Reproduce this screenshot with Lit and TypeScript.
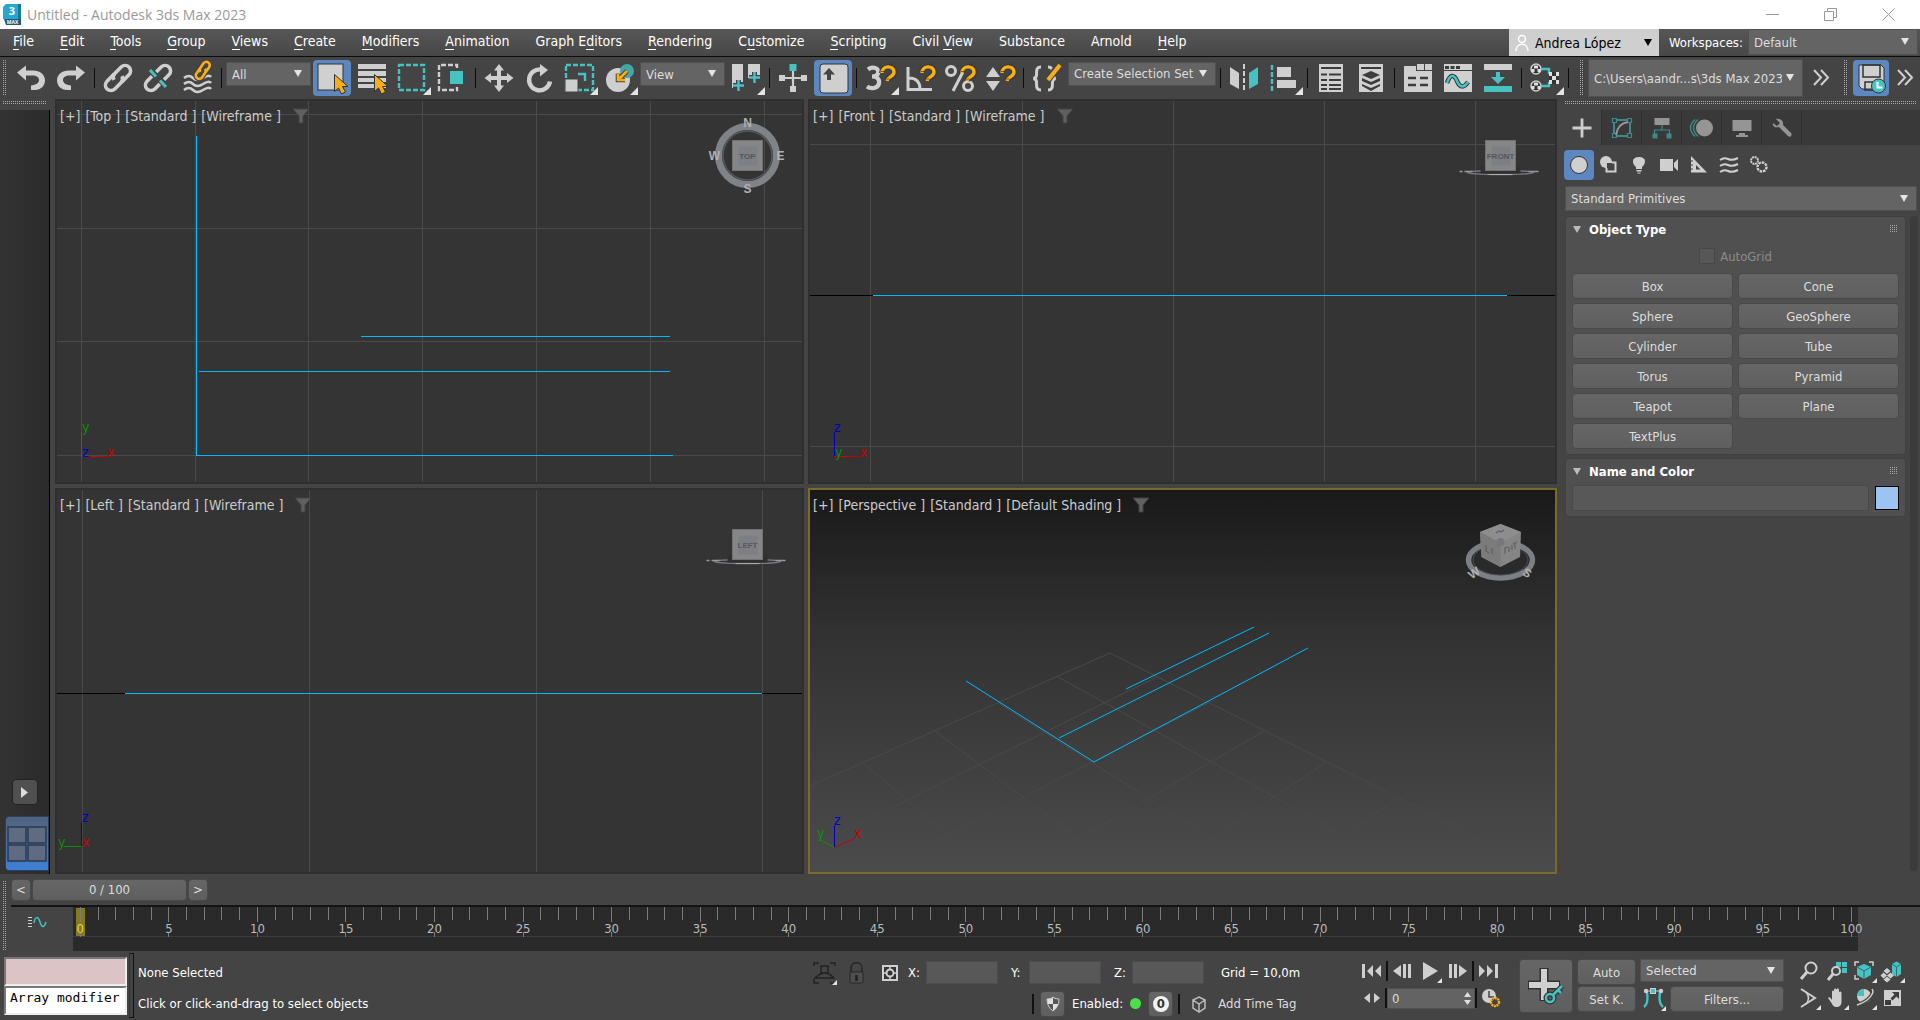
import { LitElement, html, svg, css, TemplateResult } from "lit";
import { customElement, property } from "lit/decorators.js";
import { classMap } from "lit/directives/class-map.js";

const flyout = svg`<path d="M39 29v8h-8z" fill="#e4e4e4"/>`;
const magnet = svg`<path d="M22 15c0-8 12-8 12-1 0 5-6 4-7 9" fill="none" stroke="#3a3a3a" stroke-width="6"/><path d="M22 15c0-8 12-8 12-1 0 5-6 4-7 9" fill="none" stroke="#fbae17" stroke-width="3.400"/><path d="M21 13.500h3M26 21h3.500" stroke="#8a5c00" stroke-width="1"/>`;
const cursor = svg`<path d="M22.500 16.500v17l4-3.500 3 6 4-2-3-5.500h5.500z" fill="#fbae17" stroke="#333" stroke-width="1"/>`;
const chain = (c: string, w = 3.6) => svg`<g fill="none" stroke="${c}" stroke-width="${w}"><path d="M20 14.500h-10a5.500 5.500 0 0 0 0 11h9a5.500 5.500 0 0 0 5-4"/><path d="M20 25.500h10a5.500 5.500 0 0 0 0-11h-9a5.500 5.500 0 0 0-5 4"/></g>`;
const waves = (c: string) => svg`<path d="M6 20q5-4 9 0t10 0 8-1M6 26q5-4 9 0t10 0 8-1M6 32q5-4 9 0t10 0 8-1" fill="none" stroke="${c}" stroke-width="2.600"/>`;

const icons: Record<string, TemplateResult> = {
  undo: svg`<path d="M6 14.500l9-7v5H22c7 0 12 4 12 10 0 5-4 9.500-10 9.500h-4v-4.500c5-.5 8-2.500 8-5.500s-3-4.500-6-4.500h-7v5z" fill="#cfcfcf"/>`,
  redo: svg`<path d="M34 14.500l-9-7v5H18c-7 0-12 4-12 10 0 5 4 9.500 10 9.500h4v-4.500c-5-.5-8-2.500-8-5.500s3-4.500 6-4.500h7v5z" fill="#cfcfcf"/>`,
  link: svg`<g transform="rotate(-45 20 20)">${chain("#cfcfcf")}</g>`,
  unlink: svg`<g transform="rotate(-45 20 20)" fill="none" stroke="#cfcfcf" stroke-width="3.600"><path d="M17 14.500h-7a5.500 5.500 0 0 0 0 11h7M23 25.500h7a5.500 5.500 0 0 0 0-11h-7"/></g><path d="M12 12l6 6.500M22 22.500l6 6.500" stroke="#46c2c2" stroke-width="3"/>`,
  bind: svg`${waves("#cfcfcf")}<g transform="translate(13 -2) rotate(-55 14 14) scale(.62)">${chain("#444", 8)}${chain("#fbae17", 4.2)}</g>`,
  select: svg`<rect x="6" y="6" width="25" height="26" fill="#d0d0d0" stroke="#333"/>${cursor}`,
  byName: svg`<path d="M6 6h28v5H6zM6 13h28v5H6zM6 20h28v4H6zM6 26h28v4H6z" fill="#cfcfcf"/>${cursor}`,
  rect: svg`<rect x="7" y="7" width="25" height="25" fill="none" stroke="#46c2c2" stroke-width="2.400" stroke-dasharray="5 2"/>${flyout}`,
  crossing: svg`<path d="M25 10V7H7v25h18v-3" fill="none" stroke="#cfcfcf" stroke-width="2.400" stroke-dasharray="5 2"/><rect x="18" y="13" width="13" height="13" fill="#46c2c2"/>`,
  move: svg`<path d="M20 6l5 6.500h-3V18h6v-3l6.500 5-6.500 5v-3h-6v5.500h3L20 34l-5-6.500h3V22h-6v3l-6.500-5 6.500-5v3h6v-5.500h-3z" fill="#cfcfcf"/>`,
  rotate: svg`<path d="M22 11.500a10.500 10.500 0 1 0 9 12" fill="none" stroke="#cfcfcf" stroke-width="4.400"/><path d="M21 6l8 6-8 6.500z" fill="#cfcfcf"/>`,
  scale: svg`<rect x="7" y="7" width="27" height="25" fill="none" stroke="#46c2c2" stroke-width="2.400" stroke-dasharray="5 2"/><rect x="6" y="21" width="13" height="13" fill="#cfcfcf" stroke="#444"/><path d="M19 16h7v7" fill="none" stroke="#46c2c2" stroke-width="2.400"/>${flyout}`,
  place: svg`<circle cx="19" cy="22" r="12" fill="#cfcfcf"/><circle cx="28" cy="13" r="7" fill="#46a5a8"/><path d="M28 13l-8 8M19 15.500V22h7" fill="none" stroke="#444" stroke-width="4.600"/><path d="M28 13l-8 8M19 15.500V22h7" fill="none" stroke="#fbae17" stroke-width="2.600"/>${flyout}`,
  pivot: svg`<path d="M6 6h11v18h-5v6H6zM22 6h12v14H22z" fill="#cfcfcf"/><path d="M12.500 22v11M7 27.500h11M28.500 14v11M23 19.500h11" stroke="#444" stroke-width="5"/><path d="M12.500 22v11M7 27.500h11M28.500 14v11M23 19.500h11" stroke="#46c2c2" stroke-width="2.400"/>${flyout}`,
  manipulate: svg`<path d="M20 10v20M9 20h22" stroke="#cfcfcf" stroke-width="2.200"/><path d="M6 17h6v6H6zM28 17h6v6h-6zM17 28h6v6h-6z" fill="#cfcfcf"/><path d="M16.500 6h7v7h-7z" fill="#46c2c2"/>`,
  keyboard: svg`<rect x="7" y="6" width="28" height="29" rx="3" fill="#cfcfcf" stroke="#333"/><path d="M16 10l6 6.500h-4V22h-4v-5.500h-4z" fill="#444"/>`,
  snap: svg`<path d="M8 11.500c5-4 12-1 10 4-1 3-4 3-6 3 4 0 8 2 7 7-1 5-8 6-12 3" fill="none" stroke="#cfcfcf" stroke-width="4.200"/>${magnet}${flyout}`,
  angle: svg`<path d="M8 9v22.500h24M9 20c8 0 11 5 11 11" fill="none" stroke="#cfcfcf" stroke-width="3"/>${magnet}`,
  percent: svg`<circle cx="11" cy="13" r="4.500" fill="none" stroke="#cfcfcf" stroke-width="3"/><circle cx="28" cy="28" r="4.500" fill="none" stroke="#cfcfcf" stroke-width="3"/><path d="M26 8L13 33" stroke="#cfcfcf" stroke-width="3"/>${magnet}`,
  spinner: svg`<path d="M6 19l7-10 7 10zM6 23h14l-7 10z" fill="#cfcfcf"/>${magnet}`,
  braces: svg`<path d="M14 9c-6 0-4 6-4.500 8 0 2-1 3-3 3.500 2 .5 3 1.500 3 3.500.5 2-1.500 8 4.500 8M21 9c6 0 4 6 4.500 8 0 2 1 3 3 3.500-2 .5-3 1.500-3 3.500-.5 2 1.500 8-4.500 8" fill="none" stroke="#cfcfcf" stroke-width="3"/><path d="M32 7L20 23" stroke="#444" stroke-width="7"/><path d="M33 7L21 22" stroke="#fbae17" stroke-width="4"/>`,
  mirror: svg`<path d="M6 9l9 5v13l-9 5z" transform="rotate(180 10.500 20.500)" fill="none"/><path d="M6 9l9 6v16l-9-5z" fill="#cfcfcf"/><path d="M34 9l-9 6v16l9-5z" fill="#46c2c2"/><path d="M20 6v28" stroke="#cfcfcf" stroke-width="2" stroke-dasharray="5 2"/>`,
  align: svg`<path d="M8 7v26" stroke="#46c2c2" stroke-width="2.400" stroke-dasharray="5 2"/><path d="M13 9h14v10H13zM13 22h19v8H13z" fill="#cfcfcf"/>${flyout}`,
  explorer: svg`<rect x="8" y="6" width="24" height="28" fill="#d0d0d0"/><path d="M10 10h20M10 16.500h6M18 16.500h12M10 22h6M18 22h12M10 27h6M18 27h12M10 31h6M18 31h12" stroke="#3c3c3c" stroke-width="2"/>`,
  layers: svg`<rect x="8" y="6" width="24" height="28" fill="#d0d0d0"/><path d="M10 10h20" stroke="#3c3c3c" stroke-width="2"/><path d="M20 13l9 4-9 4-9-4zM11 20l9 4 9-4v3l-9 4-9-4zM11 26l9 4 9-4v2l-9 5-9-5z" fill="#3c3c3c"/>`,
  ribbon: svg`<path d="M6 8h12v5h16v21H6z" fill="#d0d0d0"/><path d="M19 6h7v6h-7zM27 6h7v6h-7z" fill="#d0d0d0"/><path d="M10 20h8M22 20h8M10 27h8M22 27h8" stroke="#3c3c3c" stroke-width="2.400"/>`,
  curve: svg`<rect x="6" y="6" width="28" height="28" fill="#d0d0d0"/><path d="M7 9.500h4M12.500 9.500h4M18 9.500h4" stroke="#3c3c3c" stroke-width="3"/><path d="M6 12.500h28" stroke="#3c3c3c"/><path d="M9 25c3-9 7-9 10-2s7 7 11 1" fill="none" stroke="#333" stroke-width="4.500"/><path d="M9 25c3-9 7-9 10-2s7 7 11 1" fill="none" stroke="#46c2c2" stroke-width="2.600"/>`,
  schematic: svg`<path d="M6 6h28v6H6z" fill="#cfcfcf"/><path d="M6 28h28v6H6zM18 14h4v5h5l-7 7-7-7h5z" fill="#46c2c2"/>`,
  material: svg`<g stroke="#cfcfcf" fill="#333" stroke-width="1.500"><circle cx="11" cy="11" r="5"/><circle cx="11" cy="28" r="5"/></g><path d="M9 7.500h4v3H9zM6.500 11h3v3h-3zM12.500 11h3v3h-3zM9 24.500h4v3H9zM6.500 28h3v3h-3zM12.500 28h3v3h-3z" fill="#e0e0e0"/><path d="M17 11h7v5M17 28h7v-4" fill="none" stroke="#46c2c2" stroke-width="2.400"/><rect x="24" y="14" width="10" height="12" fill="#333"/><path d="M24 14h3v4h-3zM31 14h3v4h-3zM27 18h4v4h-4zM24 22h3v4h-3zM31 22h3v4h-3z" fill="#e0e0e0"/>${flyout}`,
  autosave: svg`<path d="M8 7h22l3 3v21H11l-3-3z" fill="#cfcfcf" stroke="#333"/><path d="M12 7h17v12H12zM14 24h12v8H14z" fill="none" stroke="#333" stroke-width="1.500"/><circle cx="27.500" cy="28" r="7" fill="#46c2c2" stroke="#333"/><path d="M26.500 24v5.500h5" fill="none" stroke="#fff" stroke-width="2.200"/>`,
  more: svg`<path d="M13 12l7 7.500-7 7.500M20 12l7 7.500-7 7.500" fill="none" stroke="#cfcfcf" stroke-width="2"/>`,

  create: svg`<path d="M20 10.500v19M10.500 20h19" stroke="#cfcfcf" stroke-width="2.800"/>`,
  modify: svg`<path d="M12 12h16v16H12z" fill="none" stroke="#3c8a8c" stroke-width="2"/><path d="M10.500 10.500h4v4h-4zM25.500 10.500h4v4h-4zM10.500 25.500h4v4h-4zM25.500 25.500h4v4h-4z" fill="#3a3a3a" stroke="#3c8a8c" stroke-width="1.200"/><path d="M14 27c1-7 5-12 12-13" fill="none" stroke="#999" stroke-width="1.800"/>`,
  hierarchy: svg`<path d="M12.500 10h15v7h-15z" fill="#959595"/><path d="M20 17v5M12.500 26v-4h15v4" fill="none" stroke="#3c8a8c" stroke-width="1.200"/><path d="M10.500 25.500h5v5h-5zM24.500 25.500h5v5h-5z" fill="#3c8a8c"/>`,
  motion: svg`<circle cx="22.500" cy="20" r="8.500" fill="#959595"/><path d="M16 11.500q-9 8 0 17M13 11.500q-9 8 0 17" fill="none" stroke="#3c8a8c" stroke-width="1.400"/>`,
  display: svg`<path d="M10.500 12h19v11h-19zM17 25h6v2h3v2H14v-2h3z" fill="#959595"/>`,
  utilities: svg`<path d="M11 15l4 3 3-3-4-4c4-1 8 2 7 6l8 8c2 2-1 5-3 3l-9-9c-4 1-7-1-6-4z" fill="#959595"/>`,

  geometry: svg`<circle cx="15" cy="15" r="8.500" fill="#d0d0d0" stroke="#333"/>`,
  shapes: svg`<circle cx="12" cy="12" r="6" fill="#cfcfcf"/><rect x="12.500" y="12.500" width="9" height="9" fill="none" stroke="#cfcfcf" stroke-width="2"/><path d="M13 13h5c0 3-2 5-5 5z" fill="#444"/>`,
  light: svg`<path d="M15 7c-8 0-7 7-3 10v2h6v-2c4-3 5-10-3-10zM12.500 20h5v1.500h-5zM13.500 22.500h3v1h-3z" fill="#cfcfcf"/>`,
  camera: svg`<path d="M6 9h13v12H6zM20 13l4-4v12l-4-4z" fill="#cfcfcf"/>`,
  helper: svg`<path d="M7 6l16 16.500H7v-3h2v-1H7v-3h2v-1H7v-3h2v-1H7z" fill="#cfcfcf"/><path d="M12 15l4.500 4.500H12z" fill="#444"/>`,
  space: svg`<path d="M6 10q4-3 8-1t10-1M6 16q4-3 8-1t10-1M6 22q4-3 8-1t10-1" fill="none" stroke="#cfcfcf" stroke-width="2"/>`,
  systems: svg`<circle cx="10.500" cy="10.500" r="3.500" fill="none" stroke="#cfcfcf" stroke-width="2" stroke-dasharray="2 .7"/><circle cx="18" cy="17" r="4.500" fill="none" stroke="#cfcfcf" stroke-width="2.400" stroke-dasharray="2.500 .9"/>`,
};

const pic = (name: string, size: number) =>
  html`<svg width=${size} height=${size} viewBox="0 0 ${size} ${size}" aria-hidden="true">${icons[name]}</svg>`;

const BASE = css`
  * { box-sizing: border-box; }
  button, select, input { font: inherit; color: inherit; margin: 0; padding: 0; border: 0; border-radius: 0; outline: 0; background: none; }
  button { display: flex; align-items: center; justify-content: center; }
  svg { display: block; flex: none; }
  .face { background: linear-gradient(#666, #5f5f5f); border: 1px solid #494949; border-radius: 4px; color: #ddd; }
  .grip, .dots { background: conic-gradient(#a8a8a8 25%, transparent 0) 0 0 / 2px 2px; }
`;

@customElement("drop-down")
class DropDown extends LitElement {
  @property() value = "";
  @property() label = "";
  static styles = [BASE, css`
    :host { display: block; position: relative; background: #646464; border: 1px solid #505050; color: #ddd; font-size: 13px; }
    select { appearance: none; display: block; width: 100%; height: 100%; padding: 0 20px 0 5px; background: none; }
    .arrow { position: absolute; right: 8px; top: 50%; width: 8px; height: 7px; margin-top: -4px; pointer-events: none; }
  `];
  render() {
    return html`<select aria-label=${this.label}><option>${this.value}</option></select>
      <svg class="arrow" viewBox="0 0 8 7"><path d="M0 0h8L4 7z" fill="#e4e4e4"/></svg>`;
  }
}

type Line = [number, number, number, number];
const GRID = "#4a4a4a", BLUE = "#00b9ff";
const straight = (list: Line[], c: string) =>
  list.map(([a, b, d, e]) => svg`<rect x=${a} y=${b} width=${d - a + 1} height=${e - b + 1} fill=${c} shape-rendering="crispEdges"/>`);
const slanted = (list: Line[], c: string) =>
  list.map(([a, b, d, e]) => svg`<line x1=${a} y1=${b} x2=${d} y2=${e} stroke=${c}/>`);
const axis = (x: number, y: number, dx: number, dy: number, c: string, t: string, tx: number, ty: number) =>
  svg`<line x1=${x + 0.5} y1=${y + 0.5} x2=${x + dx + 0.5} y2=${y + dy + 0.5} stroke=${c}/><text class="axis" x=${tx} y=${ty} fill=${c}>${t}</text>`;

const flatCube = (x: number, y: number, name: string) => svg`
  <rect x=${x - 15} y=${y - 15} width="30" height="30" fill="#868686" stroke="#727272"/>
  <rect x=${x - 9} y=${y - 9} width="19" height="19" fill="#7d7f84"/>
  <text class="cube" x=${x} y=${y + 3}>${name}</text>`;
const sideCube = (x: number, y: number, name: string) => svg`
  <ellipse cx=${x} cy=${y + 17} rx="33" ry="2" fill="none" stroke="#777a7f" stroke-width="1.500"/>
  <path d="M${x - 41} ${y + 16}h3M${x - 36} ${y + 16}h8M${x + 28} ${y + 16}h10" stroke="#999" stroke-width="1.500"/>
  <rect x=${x - 20} y=${y + 10} width="40" height="8" fill="#303030"/>
  ${flatCube(x, y, name)}
  <path d="M${x - 12} ${y + 19}h24" stroke="#aaa"/>`;

const REACH: Line[] = [
  [1110, 653, 810, 786], [1110, 653, 1502, 850],
  [1058, 677, 1370, 850], [998, 703, 1230, 850], [935, 731, 1093, 850], [863, 763, 969, 852],
  [1157, 677, 810, 848], [1208, 703, 920, 850], [1264, 731, 1060, 850], [1325, 763, 1195, 850], [1396, 799, 1325, 850],
];

const GLYPH = { x: "#c80000", y: "#0a8f0a", z: "#0000c8" };
const views = [
  {
    name: "Top", shade: "Wireframe", box: "55 99 749 385",
    body: () => svg`
      ${straight([81, 195, 308, 422, 536, 650, 764].map((x) => [x, 101, x, 481] as Line), GRID)}
      ${straight([114, 228, 341, 455].map((y) => [57, y, 801, y] as Line), GRID)}
      ${straight([[196, 136, 196, 455], [196, 455, 672, 455], [199, 371, 669, 371], [361, 336, 669, 336]], BLUE)}
      ${axis(81, 456, 0, -24, GLYPH.y, "y", 82, 432)}${axis(81, 456, 26, 0, GLYPH.x, "x", 107, 457)}
      <text class="axis" x="82" y="457" fill=${GLYPH.z}>z</text>
      <circle cx="747.500" cy="155.500" r="29" fill="none" stroke="#7f8287" stroke-width="7"/>
      <circle cx="747.500" cy="155.500" r="24.500" fill="none" stroke="#55585c" stroke-width="1.500"/>
      <text class="compass" x="747.500" y="127">N</text><text class="compass" x="747.500" y="193">S</text>
      <text class="compass" x="714.500" y="160">W</text><text class="compass" x="780.500" y="160">E</text>
      ${flatCube(747.5, 155.5, "TOP")}`,
  },
  {
    name: "Front", shade: "Wireframe", box: "808 99 749 385",
    body: () => svg`
      ${straight([870, 1022, 1173, 1324, 1475].map((x) => [x, 101, x, 481] as Line), GRID)}
      ${straight([[810, 144, 1554, 144], [810, 446, 1554, 446]], GRID)}
      ${straight([[810, 295, 1554, 295]], "#000")}${straight([[873, 295, 1506, 295]], BLUE)}
      ${axis(834, 456, 0, -24, GLYPH.z, "z", 834, 432)}${axis(834, 456, 26, 0, GLYPH.x, "x", 860, 457)}
      <text class="axis" x="835" y="457" fill=${GLYPH.y}>y</text>
      ${sideCube(1500.5, 155.5, "FRONT")}`,
  },
  {
    name: "Left", shade: "Wireframe", box: "55 488 749 386",
    body: () => svg`
      ${straight([82, 309, 536, 762].map((x) => [x, 490, x, 871] as Line), GRID)}
      ${straight([[57, 693, 801, 693]], "#000")}${straight([[125, 693, 761, 693]], BLUE)}
      ${axis(81, 846, 0, -24, GLYPH.z, "z", 82, 822)}${axis(81, 846, -18, 0, GLYPH.y, "y", 58, 847)}
      <text class="axis" x="82" y="847" fill=${GLYPH.x}>x</text>
      ${sideCube(747.5, 544.5, "LEFT")}`,
  },
  {
    name: "Perspective", shade: "Default Shading", box: "808 488 749 386",
    body: () => svg`
      ${slanted(REACH, GRID)}
      ${slanted([[966, 681, 1094, 762], [1094, 762, 1308, 648], [1059, 738, 1269, 633], [1126, 689, 1254, 627]], BLUE)}
      ${axis(834, 847, 0, -22, GLYPH.z, "z", 834, 825)}${axis(834, 847, 20, -9, GLYPH.x, "x", 854, 838)}${axis(834, 847, -15, -8, GLYPH.y, "y", 817, 838)}
      <ellipse cx="1500.500" cy="560" rx="32" ry="18" fill="#2a2a2a" stroke="#7c8086" stroke-width="5.500"/>
      <ellipse cx="1500.500" cy="560" rx="27.500" ry="15" fill="none" stroke="#4c4e52"/>
      <text class="compass" transform="rotate(-35 1474 573)" x="1474" y="577">W</text><text class="compass" transform="rotate(35 1527 573)" x="1527" y="577">S</text>
      <path d="M1500.500 524l20.500 8-1 25-19.500 10-19-10-1.500-25z" fill="#858585"/>
      <path d="M1500.500 524l20.500 8-20.500 11-20.500-11z" fill="#8d8d8d"/><path d="M1480 532l20.500 11v24l-19-10z" fill="#7b7b7b"/>
      <circle cx="1500.500" cy="542" r="4" fill="#75777b"/>
      <path d="M1496 533l3-2 2 1 3-2M1486 545v6l3 2M1492 548v6M1505 554v-6l3-1M1509 552v-5M1512 550v-5M1515 549v-6M1513 544l4-2" fill="none" stroke="#606060" stroke-width="1.200"/>`,
  },
];

@customElement("view-port")
class ViewPort extends LitElement {
  @property({ type: Number }) index = 0;
  static styles = [BASE, css`
    :host { display: block; position: relative; overflow: hidden; min-width: 0; min-height: 0; background: #343434; border: 2px solid #2f2f2f; color: #ccc; font-size: 14px; }
    :host([active]) { background: linear-gradient(#191919, #323232 38%, #4b4b4b); border-color: #7e6a28; }
    .scene { position: absolute; inset: -2px; width: calc(100% + 4px); height: calc(100% + 4px); }
    .labels { position: absolute; left: 3px; top: 4px; display: flex; align-items: center; gap: 5px; height: 22px; }
    .labels svg { margin-left: 6px; }
    .axis { font-size: 14px; }
    .cube { font: bold 8px "Liberation Sans", sans-serif; fill: #55575b; text-anchor: middle; }
    .compass { font: bold 12px "Liberation Sans", sans-serif; fill: #b0b0b0; text-anchor: middle; }
  `];
  render() {
    const v = views[this.index];
    return html`
      <svg class="scene" viewBox=${v.box} preserveAspectRatio="xMidYMid slice">${v.body()}</svg>
      <div class="labels">
        <button>[+]</button><button>[${v.name} ]</button><button>[Standard ]</button><button>[${v.shade} ]</button>
        <svg width="18" height="16" viewBox="0 0 18 16"><path d="M1 1h16l-6 7v7H7V8z" fill="#606060" stroke="#424242"/></svg>
      </div>`;
  }
}

@customElement("main-toolbar")
class MainToolbar extends LitElement {
  static styles = [BASE, css`
    :host { display: flex; align-items: center; height: 42px; background: #444; }
    .tool { width: 40px; height: 40px; flex: none; }
    .on { position: relative; }
    .on::before { content: ""; position: absolute; inset: 2px 1px; border-radius: 4px; background: #5d87bf; }
    .on svg { position: relative; }
    .sep { width: 7px; flex: none; display: flex; justify-content: center; }
    .sep::after { content: ""; width: 1px; height: 20px; background: #0c0c0c; }
    .grip { width: 4px; height: 36px; flex: none; }
    .first { margin: 0 5px 0 2px; }
    .mid { margin: 0 5px 0 7px; }
    drop-down { flex: none; height: 24px; margin: 0 1px 8px; }
    .all, .view { width: 85px; }
    .sets { width: 148px; margin-bottom: 9px; }
    .path { flex: 1; height: 38px; margin: 0; max-width: 220px; }
    .narrow { width: 30px; margin-left: 3px; }
    .narrow:last-child { margin-left: 0; }
    .save { width: 38px; }
  `];
  private tool(n: string) {
    return html`<button class=${classMap({ tool: true, on: n === "select" || n === "keyboard" })} aria-label=${n}>${pic(n, 40)}</button>`;
  }
  render() {
    const t = (s: string) => s.split(" ").map((n) => (n === "|" ? html`<span class="sep"></span>` : this.tool(n)));
    return html`
      <span class="grip first"></span>
      ${t("undo redo | link unlink bind |")}
      <drop-down class="all" value="All" label="Selection filter"></drop-down>
      ${t("select byName rect crossing | move rotate scale place")}
      <drop-down class="view" value="View" label="Reference coordinate system"></drop-down>
      ${t("pivot | manipulate keyboard | snap angle percent spinner | braces")}
      <drop-down class="sets" value="Create Selection Set" label="Named selection sets"></drop-down>
      ${t("| mirror align | explorer layers | ribbon curve schematic | material |")}
      <span class="grip mid"></span>
      <drop-down class="path" value="C:\\Users\\aandr...s\\3ds Max 2023" label="Project folder"></drop-down>
      <button class="tool narrow" aria-label="More">${pic("more", 40)}</button>
      <span class="grip mid"></span>
      <button class="tool save on" aria-label="Autosave">${pic("autosave", 40)}</button>
      <button class="tool narrow" aria-label="More">${pic("more", 40)}</button>`;
  }
}

@customElement("command-panel")
class CommandPanel extends LitElement {
  static styles = [BASE, css`
    :host { display: flex; flex-direction: column; padding: 2px 0 3px 6px; font-size: 13px; color: #ddd; }
    .grip { height: 4px; margin: 0 3px 5px 1px; }
    .tabs { display: flex; height: 35px; background: #393939; }
    .tab { width: 40px; overflow: hidden; border-right: 1px solid #2f2f2f; }
    .tab:first-child { background: #444; width: 39px; }
    .kinds { display: flex; height: 41px; padding: 5px 0 0 1px; }
    .kind { width: 30px; height: 30px; border-radius: 4px; }
    .kind:first-child { background: #5d87bf; }
    drop-down { height: 25px; margin: 0 3px 5px 2px; }
    .body { flex: 1; display: flex; gap: 4px; padding: 0 2px 0 2px; }
    .rolls { flex: 1; display: flex; flex-direction: column; gap: 3px; }
    .bar { width: 8px; border-radius: 4px; background: #3b3b3b; }
    .roll { background: #505050; border: 1px solid #404040; border-radius: 4px; padding: 0 6px 5px; }
    .head { display: flex; align-items: center; height: 24px; gap: 8px; padding: 0 2px 0 1px; }
    h2 { flex: 1; margin: 0; font-size: 13px; font-weight: bold; color: #fff; }
    .dots { width: 8px; height: 8px; }
    .auto { display: flex; align-items: center; justify-content: center; gap: 5px; height: 22px; margin: 4px 0 6px; color: #8b8b8b; }
    .auto input { appearance: none; width: 16px; height: 16px; background: #575757; border: 1px solid #484848; }
    .types { display: grid; grid-template-columns: 1fr 1fr; gap: 4px 5px; }
    .types button { height: 26px; }
    .name { display: flex; align-items: center; gap: 6px; margin-top: 2px; }
    .name input { flex: 1; min-width: 0; height: 26px; background: #585858; border: 1px solid #494949; }
    .swatch { width: 24px; height: 24px; background: #9bc4f2; border: 1px solid #000; }
  `];
  private roll(title: string, content: TemplateResult) {
    return html`<section class="roll"><div class="head">
      <svg width="8" height="7" viewBox="0 0 8 7"><path d="M0 0h8L4 7z" fill="#bbb"/></svg>
      <h2>${title}</h2><span class="dots"></span></div>${content}</section>`;
  }
  render() {
    const types = "Box Cone Sphere GeoSphere Cylinder Tube Torus Pyramid Teapot Plane TextPlus".split(" ");
    return html`
      <div class="grip"></div>
      <div class="tabs">${"create modify hierarchy motion display utilities".split(" ").map((n) => html`<button class="tab" aria-label=${n}>${pic(n, 40)}</button>`)}</div>
      <div class="kinds">${"geometry shapes light camera helper space systems".split(" ").map((n) => html`<button class="kind" aria-label=${n}>${pic(n, 30)}</button>`)}</div>
      <drop-down value="Standard Primitives" label="Category"></drop-down>
      <div class="body">
        <div class="rolls">
          ${this.roll("Object Type", html`
            <label class="auto"><input type="checkbox" disabled>AutoGrid</label>
            <div class="types">${types.map((n) => html`<button class="face">${n}</button>`)}</div>`)}
          ${this.roll("Name and Color", html`<div class="name"><input type="text" aria-label="Object name"><button class="swatch" aria-label="Object color"></button></div>`)}
        </div>
        <div class="bar"></div>
      </div>`;
  }
}

@customElement("time-line")
class TimeLine extends LitElement {
  static styles = [BASE, css`
    :host { display: flex; height: 77px; background: #444; font-size: 13px; color: #ddd; }
    .grip { width: 4px; margin: 7px 5px 1px 2px; }
    .col { flex: 1; min-width: 0; }
    .slide { display: flex; align-items: center; gap: 1px; height: 31px; }
    .slide button { height: 22px; width: 20px; }
    .slide .thumb { width: 155px; }
    .track { display: flex; height: 46px; border-top: 2px solid #141414; }
    .mini { width: 62px; justify-content: flex-start; align-items: flex-start; padding: 9px 0 0 17px; }
    .ruler { flex: 1; height: 44px; background: #2a2a2a; overflow: visible; }
    .end { width: 62px; }
    text { fill: #bbb; text-anchor: middle; }
    .now { fill: #e0d25a; }
  `];
  render() {
    const at = (i: number) => `${((7.3 + 17.711 * i) / 1785) * 100}%`;
    const frames = Array.from({ length: 101 }, (_, i) => i);
    return html`
      <div class="grip"></div>
      <div class="col">
        <div class="slide"><button class="face">&lt;</button><button class="face thumb">0 / 100</button><button class="face">&gt;</button></div>
        <div class="track">
          <button class="mini" aria-label="Mini curve editor"><svg width="19" height="13" viewBox="0 0 19 13"><path d="M0 1.500h4M0 4.500h4M0 7.500h4M0 10.500h4" stroke="#cfcfcf"/><path d="M6 7c1-7 4-7 6-1s4 6 6 0" fill="none" stroke="#46c2c2" stroke-width="1.500"/></svg></button>
          <svg class="ruler" width="100%" height="44">
            <line x1="0" x2="100%" y1="29.500" y2="29.500" stroke="#3c3c3c"/>
            <rect x="3" y="1" width="9" height="28" fill="#857a1c"/>
            ${frames.map((i) => svg`<line x1=${at(i)} x2=${at(i)} y1="0" y2=${i % 5 ? 13 : 15} stroke="#7c7c7c" shape-rendering="crispEdges"/>`)}
            ${frames.filter((i) => i % 5 === 0).map((i) => svg`<line x1=${at(i)} x2=${at(i)} y1="25" y2="30" stroke="#7c7c7c" shape-rendering="crispEdges"/><text class=${i ? "" : "now"} x=${at(i)} y="26">${i}</text>`)}
          </svg>
          <span class="end"></span>
        </div>
      </div>`;
  }
}

const tri = svg`<path d="M25 20v5h-5z" fill="#e4e4e4"/>`;
const small: Record<string, TemplateResult> = {
  first: svg`<path d="M3 6h3v14H3zM14 7v12l-6-6zM22 7v12l-6-6z" fill="#cfcfcf"/>`,
  prev: svg`<path d="M12 7v12l-8-6zM14 6h3v14h-3zM19 6h3v14h-3z" fill="#cfcfcf"/>`,
  play: svg`<path d="M6 4l15 9-15 9z" fill="#cfcfcf"/>${tri}`,
  next: svg`<path d="M14 7v12l8-6zM4 6h3v14H4zM9 6h3v14H9z" fill="#cfcfcf"/>`,
  last: svg`<path d="M20 6h3v14h-3zM12 7v12l6-6zM4 7v12l6-6z" fill="#cfcfcf"/>`,
  mode: svg`<path d="M11 8v10l-6-5zM15 8v10l6-5z" fill="#cfcfcf"/>`,
  config: svg`<circle cx="11" cy="11" r="7" fill="#cfcfcf"/><path d="M11 6v6h5" fill="none" stroke="#444" stroke-width="1.500"/><circle cx="17" cy="17" r="4" fill="#444" stroke="#fbae17" stroke-width="2.400" stroke-dasharray="2 .6"/>`,
  zoom: svg`<circle cx="15" cy="10" r="5.500" fill="none" stroke="#cfcfcf" stroke-width="2"/><path d="M11 14l-6 7" stroke="#cfcfcf" stroke-width="3"/>`,
  zoomAll: svg`<path d="M12 4h5v5h-5zM18 4h5v5h-5zM18 10h5v5h-5z" fill="#46c2c2"/><circle cx="12" cy="13" r="4" fill="#444" stroke="#cfcfcf" stroke-width="2"/><path d="M9 16l-5 6" stroke="#cfcfcf" stroke-width="3"/>`,
  extents: svg`<path d="M3 8V4h4M17 4h4v4M3 17v4h4" fill="none" stroke="#cfcfcf" stroke-width="1.500"/><path d="M12 6l7 3v8l-7 4-7-4V9z" fill="#46c2c2"/><path d="M5 9l7 4 7-4M12 13v8" fill="none" stroke="#2f6f70"/>${tri}`,
  extentsAll: svg`<path d="M12 6l4.500-2.500L21 6v10l-4.500 3-4.500-3z" fill="#46c2c2"/><path d="M12 6l4.500 3L21 6M16.500 9v10" fill="none" stroke="#2f6f70"/><path d="M7 10l3.500 3L7 16l-3.500-3zM3.500 14.500L7 17.500l-3.500 3-3-3zM10.500 14.500l3.500 3-3.500 3-3.500-3zM7 18.500l3.500 3-3.500 3-3.500-3z" fill="#cfcfcf"/>${tri}`,
  fov: svg`<path d="M5 4l14 9L5 22" fill="none" stroke="#cfcfcf" stroke-width="2"/><path d="M10 7q5 6 0 12" fill="none" stroke="#cfcfcf" stroke-width="1.500"/>${tri}`,
  pan: svg`<path d="M4 13c1-2 3 0 4 2V7c0-2 2-2 2 0v5V5c0-2 2.500-2 2.500 0v7V5c0-2 2.500-2 2.500 0v8V8c0-2 2.500-2 2.500 0v9c0 3-2 5-5 5s-4-2-5-4z" fill="#cfcfcf"/>${tri}`,
  orbit: svg`<circle cx="12" cy="11" r="7" fill="#cfcfcf"/><path d="M12 4v7H5a7 7 0 0 1 7-7z" fill="#46c2c2"/><path d="M20 4c3 3-2 12-15 16" fill="none" stroke="#444" stroke-width="4"/><path d="M20 4c3 3-2 12-15 16" fill="none" stroke="#cfcfcf" stroke-width="1.500"/>${tri}`,
  maximize: svg`<rect x="4" y="5" width="17" height="16" fill="#cfcfcf"/><path d="M12 7h7v7l-2.500-2.500-4 4-2-2 4-4zM5 15h6v5H5z" fill="#3c3c3c"/>`,
  isolate: svg`<path d="M2 6V3h5M18 3h5v3M2 19v4h5M18 23h5M9 6h7v7H9zM3 18q10-10 19 0z" fill="none" stroke="#222" stroke-width="1.500"/>${tri}`,
  lock: svg`<path d="M7 12V8c0-7 11-7 11 0v4" fill="none" stroke="#262626" stroke-width="1.500"/><rect x="6" y="12" width="13" height="11" rx="1" fill="#4e4e4e" stroke="#262626"/><path d="M12.500 15v6" stroke="#222" stroke-width="2.500"/>`,
  absolute: svg`<rect x="6" y="6" width="14" height="14" fill="#333" stroke="#d0d0d0" stroke-width="2"/><path d="M13 6v14M6 13h14" stroke="#d0d0d0" stroke-width="1.500"/><circle cx="13" cy="13" r="3.500" fill="#333" stroke="#d0d0d0" stroke-width="2"/>`,
  shield: svg`<path d="M7 8q5 0 6-2 1 2 6 2 0 8-6 12-6-4-6-12z" fill="#e0e0e0"/><path d="M13 6q1 2 6 2v5h-6zM7 13h6v7q-5-3-6-7z" fill="#555"/><path d="M7 8q5 0 6-2 1 2 6 2 0 8-6 12-6-4-6-12z" fill="none" stroke="#ccc"/>`,
  tag: svg`<path d="M13 6l6 3v8l-6 4-6-4V9zM7 9l6 4 6-4M13 13v8" fill="none" stroke="#bbb" stroke-width="1.500"/>`,
  curves: svg`<path d="M3 21c4-3 4-9 3-15M22 21c-4-3-4-9-3-15" fill="none" stroke="#46c2c2" stroke-width="2.400"/><path d="M6 5h13" stroke="#cfcfcf"/><circle cx="5" cy="5" r="2.200" fill="#cfcfcf"/><circle cx="20" cy="5" r="2.200" fill="#cfcfcf"/><rect x="9.500" y="2.500" width="5" height="5" fill="#46c2c2" stroke="#cfcfcf"/>${tri}`,
};
const spic = (n: string) => html`<svg width="26" height="26" viewBox="0 0 26 26" aria-hidden="true">${small[n]}</svg>`;

@customElement("status-bar")
class StatusBar extends LitElement {
  static styles = [BASE, css`
    :host { display: flex; height: 69px; padding: 6px 13px 4px 4px; background: #444; font-size: 13px; color: #fff; }
    .script { width: 123px; display: flex; flex-direction: column; font: 13px "DejaVu Sans Mono", monospace; }
    .script input { width: 100%; height: 29px; padding: 0 4px 6px; background: #fff; border: 2px solid; border-color: #777 #eee #eee #777; color: #000; }
    .script input:first-child { background: #dcc3c5; }
    .split { width: 5px; margin: -4px 4px -2px 2px; border: 1px solid #111; border-left-color: #333; }
    .msg { flex: 1; min-width: 0; display: grid; grid-template-rows: 31px 31px; align-content: start; align-items: center; }
    .coords { width: 546px; }
    .row { display: flex; align-items: center; height: 31px; }
    .low { padding-left: 220px; }
    .ico { width: 26px; height: 26px; flex: none; }
    .field { display: flex; align-items: center; margin-right: 13px; }
    .field span { width: 18px; }
    .field input { width: 72px; height: 23px; background: #585858; border: 1px solid #4c4c4c; }
    .grid { margin-left: 4px; }
    .lockbtn { margin: 0 7px 0 6px; }
    .abs { margin-right: 5px; }
    .line { width: 2px; height: 20px; background: #111; flex: none; }
    .mini { width: 25px; height: 26px; }
    .low .line { margin: 0 6px 0 0; }
    .enabled { margin: 0 7px; }
    .dot { width: 11px; height: 11px; border-radius: 50%; background: #4be04b; margin-right: 7px; }
    .zero { width: 16px; height: 16px; border-radius: 50%; background: #f2f2f2; color: #333; font-weight: bold; line-height: 16px; text-align: center; }
    .low .line.second { margin: 0 6px 0 5px; }
    .tagbtn { gap: 6px; color: #ddd; }
    .play { width: 161px; }
    .play .row { height: 28px; }
    .play .row:last-child { height: 26px; }
    .ctl { width: 28px; height: 26px; flex: none; }
    .play .row:last-child .ctl { width: 27px; }
    .frame { position: relative; width: 88px; height: 21px; background: #636363; border: 1px solid #505050; }
    .frame input { width: 100%; height: 100%; padding: 0 20px 0 4px; color: #ddd; }
    .frame svg { position: absolute; right: 3px; top: 3px; pointer-events: none; }
    .keys { display: flex; gap: 4px; margin-top: 2px; }
    .big { width: 54px; height: 54px; }
    .stack { display: grid; grid-template-rows: 26px 26px; gap: 1px; width: 59px; align-content: start; }
    .sel { width: 144px; }
    .sel drop-down { height: 23px; }
    .filters { display: flex; align-items: center; margin-top: 4px; gap: 3px; }
    .filters .ico { margin-left: 1px; }
    .filters .face { flex: 1; height: 26px; }
    .nav { display: grid; grid-template-columns: repeat(4, 28px); grid-auto-rows: 27px; margin: 1px 0 0 11px; }
  `];
  private coord(a: string) {
    return html`<label class="field"><span>${a}:</span><input type="text"></label>`;
  }
  private btn(n: string, cls = "ctl") {
    return html`<button class=${cls} aria-label=${n}>${spic(n)}</button>`;
  }
  render() {
    return html`
      <div class="script"><input aria-label="Macro recorder"><input aria-label="Script listener" value="Array modifier"></div>
      <div class="split"></div>
      <div class="msg"><span>None Selected</span><span>Click or click-and-drag to select objects</span></div>
      <div class="coords">
        <div class="row">${this.btn("isolate", "ico")}${this.btn("lock", "ico lockbtn")}${this.btn("absolute", "ico abs")}
          ${this.coord("X")}${this.coord("Y")}${this.coord("Z")}<span class="grid">Grid = 10,0m</span></div>
        <div class="row low"><span class="line"></span><button class="face mini" aria-label="Security">${spic("shield")}</button>
          <span class="enabled">Enabled:</span><span class="dot"></span><button class="face mini"><span class="zero">0</span></button>
          <span class="line second"></span><button class="tagbtn">${spic("tag")}Add Time Tag</button></div>
      </div>
      <div class="play">
        <div class="row">${this.btn("first")}<span class="line"></span>${this.btn("prev")}${this.btn("play")}${this.btn("next")}<span class="line"></span>${this.btn("last")}</div>
        <div class="row">${this.btn("mode")}<span class="line"></span>
          <div class="frame"><input type="text" value="0" aria-label="Current frame"><svg width="7" height="13" viewBox="0 0 7 13"><path d="M0 5l3.500-5L7 5zM0 8h7l-3.500 5z" fill="#ddd"/></svg></div>
          <span class="line"></span>${this.btn("config")}</div>
      </div>
      <div class="keys">
        <button class="face big" aria-label="Set keys"><svg width="40" height="44" viewBox="0 0 40 44"><path d="M18 4v33M2 21h32" stroke="#333" stroke-width="9"/><path d="M18 5v31M3 21h30" stroke="#d0d0d0" stroke-width="6"/><g fill="none" stroke="#333" stroke-width="5"><circle cx="24" cy="34" r="4"/><path d="M27 31l9-9M32 26l3 3"/></g><g fill="none" stroke="#46c2c2" stroke-width="2.600"><circle cx="24" cy="34" r="4"/><path d="M27 31l9-9M32 26l3 3"/></g></svg></button>
        <div class="stack"><button class="face">Auto</button><button class="face">Set K.</button></div>
        <div class="sel"><drop-down value="Selected" label="Key set"></drop-down>
          <div class="filters">${this.btn("curves", "ico")}<button class="face">Filters...</button></div></div>
      </div>
      <div class="nav">${"zoom zoomAll extents extentsAll fov pan orbit maximize".split(" ").map((n) => this.btn(n))}</div>`;
  }
}

@customElement("app-root")
export class AppRoot extends LitElement {
  static styles = [BASE, css`
    :host { display: grid; grid-template-rows: 29px 28px auto 1fr auto auto; min-height: 100vh; background: #444; font-family: "DejaVu Sans Condensed", "Noto Sans", sans-serif; font-size: 13px; color: #fff; }
    .title { display: flex; align-items: center; background: #fff; color: #999; padding: 0 3px; font: 14px "Open Sans", sans-serif; }
    .title span { flex: 1; margin-left: 5px; }
    .title button { width: 58px; height: 29px; }
    .menu { display: flex; align-items: stretch; background: linear-gradient(#575757, #474747); border-bottom: 1px solid #0c0c0c; font-size: 14px; }
    nav { flex: 1; display: flex; }
    nav button { padding: 0 13px 3px; white-space: nowrap; }
    u { text-decoration: none; border-bottom: 1px solid #fff; }
    nav span { line-height: 14px; }
    .user { width: 150px; justify-content: flex-start; gap: 6px; padding: 0 7px 0 6px; background: #cfcfcf; color: #000; font-size: 14px; }
    .user span { flex: 1; text-align: left; }
    .ws { width: 89px; padding: 6px 0 0 10px; font-size: 13px; }
    .menu drop-down { width: 170px; margin: 0 2px 1px 0; }
    .main { display: grid; grid-template-columns: 50px 1fr 363px; min-height: 0; }
    .side { display: flex; flex-direction: column; }
    .side .grip { height: 4px; margin: 2px 3px 5px 2px; }
    .dock { flex: 1; display: flex; flex-direction: column; justify-content: flex-end; background: linear-gradient(90deg, #333, #2b2b2b); border-right: 1px solid #000; }
    .expand { width: 26px; height: 26px; margin: 0 0 11px 12px; background: #505050; border: 1px solid #222; border-radius: 4px; }
    .layout { height: 55px; margin: 0 0 3px 5px; background: linear-gradient(#52637c, #3f7fd8); border: 1px solid #2b405f; border-radius: 4px 0 0 4px; }
    .views { display: grid; grid-template-columns: 1fr 1fr; grid-template-rows: 385fr 386fr; gap: 4px; padding-left: 5px; min-width: 0; }
  `];
  private item(s: string) {
    const i = s.indexOf("_");
    return i < 0 ? html`<button>${s}</button>` : html`<button><span>${s.slice(0, i)}<u>${s[i + 1]}</u>${s.slice(i + 2)}</span></button>`;
  }
  render() {
    const menu = ["_File", "_Edit", "_Tools", "_Group", "_Views", "_Create", "_Modifiers", "_Animation", "Graph E_ditors", "_Rendering", "C_ustomize", "_Scripting", "Civil _View", "Substance", "Arnold", "_Help"];
    return html`
      <header class="title">
        <svg width="19" height="21" viewBox="0 0 19 21"><path d="M3 0h12v15H0V3z" fill="#2aa5cf"/><path d="M15 0h3v20h-3z" fill="#157a9e"/><path d="M1 15h17v6H3z" fill="#1c5b78"/><text x="9" y="11" font-size="11" font-weight="bold" fill="#fff" text-anchor="middle">3</text><text x="9.500" y="19.500" font-size="5" font-weight="bold" fill="#fff" text-anchor="middle">MAX</text></svg>
        <span>Untitled - Autodesk 3ds Max 2023</span>
        <button aria-label="Minimize"><svg width="13" height="13" viewBox="0 0 13 13"><path d="M0 6.500h13" stroke="#999"/></svg></button>
        <button aria-label="Restore"><svg width="13" height="13" viewBox="0 0 13 13"><path d="M.5 3.500h9v9h-9zM3.500 3V.5h9v9H10" fill="none" stroke="#999"/></svg></button>
        <button aria-label="Close"><svg width="13" height="13" viewBox="0 0 13 13"><path d="M.5.5l12 12M12.500.5l-12 12" stroke="#999"/></svg></button>
      </header>
      <div class="menu">
        <nav>${menu.map((m) => this.item(m))}</nav>
        <button class="user"><svg width="14" height="18" viewBox="0 0 14 18"><circle cx="7" cy="5" r="3.500" fill="none" stroke="#fff" stroke-width="1.500"/><path d="M1 17c0-9 12-9 12 0" fill="none" stroke="#fff" stroke-width="1.500"/></svg><span>Andrea López</span><svg width="8" height="7" viewBox="0 0 8 7"><path d="M0 0h8L4 7z"/></svg></button>
        <span class="ws">Workspaces:</span>
        <drop-down value="Default" label="Workspaces"></drop-down>
      </div>
      <main-toolbar></main-toolbar>
      <div class="main">
        <div class="side">
          <div class="grip"></div>
          <div class="dock">
            <button class="expand" aria-label="Expand"><svg width="8" height="11" viewBox="0 0 8 11"><path d="M0 0l7 5.500L0 11z" fill="#ddd"/></svg></button>
            <button class="layout" aria-label="Viewport layout"><svg width="40" height="36" viewBox="0 0 40 36"><path d="M1 1h18v16H1zM21 1h18v16H21zM1 19h18v16H1zM21 19h18v16H21z" fill="#5e6b80" stroke="#2a3a52" stroke-width="1.500"/></svg></button>
          </div>
        </div>
        <div class="views">${views.map((_, i) => html`<view-port .index=${i} ?active=${i === 3}></view-port>`)}</div>
        <command-panel></command-panel>
      </div>
      <time-line></time-line>
      <status-bar></status-bar>`;
  }
}
